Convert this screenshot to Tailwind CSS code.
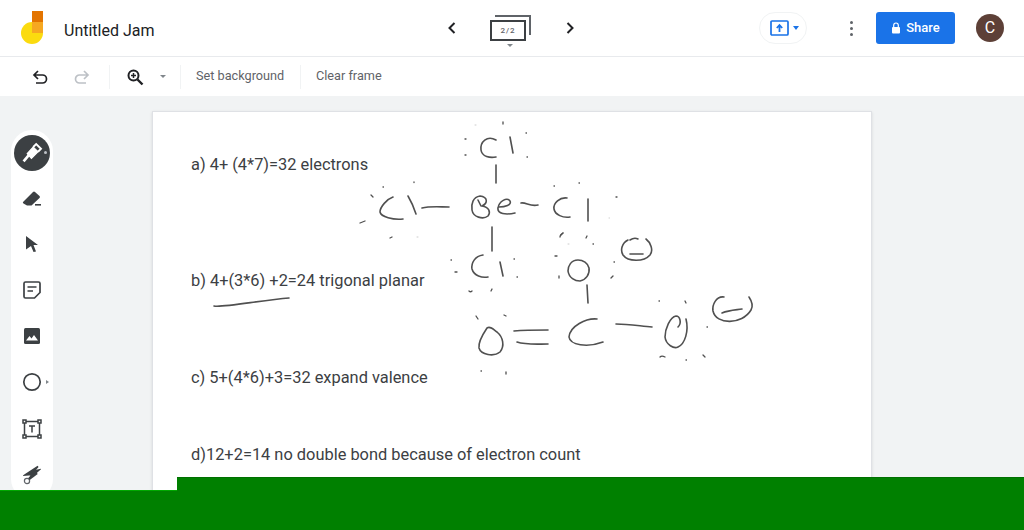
<!DOCTYPE html>
<html lang="en">
<head>
    <meta charset="UTF-8">
    <meta name="viewport" content="width=device-width, initial-scale=1.0">
    <title>Untitled Jam</title>
    <script src="https://cdn.jsdelivr.net/npm/@tailwindcss/browser@4"></script>
</head>
<body class="bg-white font-['Roboto',sans-serif]">
<div class="relative w-[1024px] h-[530px] overflow-hidden flex flex-col">

    <!-- Header -->
    <header class="h-[57px] shrink-0 flex items-center border-b border-[#e8eaed] bg-white">
        <svg class="ml-[21px] w-[24px] h-[36px] -mt-[1px]" viewBox="0 0 24 36">
            <circle cx="11" cy="23" r="11" fill="#fbdb0f"/>
            <rect x="11" y="1" width="11" height="11" fill="#e37400"/>
            <rect x="11" y="12" width="11" height="11" fill="#f6a821"/>
        </svg>
        <span class="ml-[19px] text-[16px] text-[#202124] mt-[5px] w-[90px] whitespace-nowrap">Untitled Jam</span>

        <svg class="ml-[293px] w-[10px] h-[14px]" viewBox="0 0 10 14" fill="none" stroke="#202124" stroke-width="2"><path d="M7.5 2 L2.5 7 L7.5 12"/></svg>
        <!-- frame picker -->
        <div class="relative ml-[33px] mt-[2px] w-[42px] h-[28px]">
            <div class="absolute left-[5px] top-0 w-[36px] h-[20px] border-t-[2px] border-r-[2px] border-[#5f6368]"></div>
            <div class="absolute left-0 top-[5px] w-[36px] h-[21px] bg-white border-2 border-[#3c4043] flex items-center justify-center text-[8px] font-medium text-[#5f6368] tracking-[1px]">2/2</div>
            <div class="absolute left-[17px] top-[29px] border-x-[3px] border-x-transparent border-t-[3px] border-t-[#80868b]"></div>
        </div>
        <svg class="ml-[33px] w-[10px] h-[14px]" viewBox="0 0 10 14" fill="none" stroke="#202124" stroke-width="2"><path d="M2.5 2 L7.5 7 L2.5 12"/></svg>

        <!-- present -->
        <div class="ml-[184px] w-[48px] h-[32px] rounded-full border border-[#f1f3f4] flex items-center pl-[10px] gap-[4px]">
            <svg class="w-[19px] h-[16px]" viewBox="0 0 19 16" fill="none">
                <rect x="1" y="1" width="17" height="14" rx="1" stroke="#1a73e8" stroke-width="1.7"/>
                <path d="M9.5 12 V6 M6.8 8 L9.5 5 L12.2 8" stroke="#1a73e8" stroke-width="1.8"/>
            </svg>
            <div class="border-x-[3.5px] border-x-transparent border-t-[4px] border-t-[#1a73e8]"></div>
        </div>

        <!-- more -->
        <div class="ml-[43px] flex flex-col gap-[3px]">
            <span class="w-[3px] h-[3px] rounded-full bg-[#5f6368]"></span>
            <span class="w-[3px] h-[3px] rounded-full bg-[#5f6368]"></span>
            <span class="w-[3px] h-[3px] rounded-full bg-[#5f6368]"></span>
        </div>

        <button class="ml-[23px] w-[79px] h-[32px] rounded-[3px] bg-[#1a73e8] text-white text-[13px] font-medium flex items-center justify-center gap-[5px]">
            <svg class="w-[10px] h-[12px]" viewBox="0 0 10 12" fill="none">
                <rect x="1" y="5" width="8" height="6.5" rx="1" fill="#fff"/>
                <path d="M2.7 5 V3.3 a2.3 2.3 0 0 1 4.6 0 V5" stroke="#fff" stroke-width="1.2"/>
            </svg>
            Share
        </button>
        <div class="ml-[21px] w-[28px] h-[28px] rounded-full bg-[#5d4037] text-white text-[16px] flex items-center justify-center">C</div>
    </header>

    <!-- Toolbar -->
    <div class="h-[39px] shrink-0 flex items-center bg-white text-[12.7px] text-[#5f6368]">
        <svg class="ml-[31px] w-[18px] h-[18px]" viewBox="0 0 18 18" fill="none" stroke="#202124" stroke-width="1.7"><path d="M7 3 L3 7 L7 11 M3 7 H11.5 A4 4 0 0 1 11.5 15 H5"/></svg>
        <svg class="ml-[24px] w-[18px] h-[18px]" viewBox="0 0 18 18" fill="none" stroke="#bdc1c6" stroke-width="1.7"><path d="M11 3 L15 7 L11 11 M15 7 H6.5 A4 4 0 0 0 6.5 15 H13"/></svg>
        <div class="ml-[18px] w-px h-[24px] bg-[#f1f3f4]"></div>
        <svg class="ml-[16px] w-[18px] h-[18px]" viewBox="0 0 18 18" fill="none" stroke="#202124"><circle cx="7.5" cy="7.5" r="5" stroke-width="2"/><path d="M11.5 11.5 L16.5 16.5" stroke-width="2.4"/><path d="M7.5 5 V10 M5 7.5 H10" stroke-width="1.5"/></svg>
        <div class="ml-[16px] border-x-[3px] border-x-transparent border-t-[3px] border-t-[#80868b]"></div>
        <div class="ml-[14px] w-px h-[24px] bg-[#f1f3f4]"></div>
        <span class="ml-[15px] mb-[2px] w-[88px] whitespace-nowrap">Set background</span>
        <div class="ml-[16px] w-px h-[24px] bg-[#f1f3f4]"></div>
        <span class="ml-[15px] mb-[2px] whitespace-nowrap">Clear frame</span>
    </div>

    <!-- Canvas -->
    <main class="flex-1 flex items-start bg-[#f1f3f4] min-h-0">
        <!-- Tool rail -->
        <div class="ml-[11px] mt-[34px] w-[42px] h-[370px] shrink-0 bg-white rounded-[21px] flex flex-col items-center">
            <div class="h-[46px] flex items-center justify-center">
                <div class="relative w-[36px] h-[36px] rounded-full bg-[#3c4043] flex items-center justify-center">
                    <svg class="w-[24px] h-[24px]" viewBox="0 0 20 20" fill="none" stroke="#fff">
                        <path d="M3 17 L8 11" stroke-width="2.2"/>
                        <path d="M6 10.5 L11 5 L15 9 L9.5 14.5 Z" fill="#fff" stroke-width="1"/>
                        <path d="M11 5 L13.5 2.5 L17.5 6.5 L15 9" stroke-width="1.6"/>
                    </svg>
                    <span class="absolute right-[3px] top-[16px] w-[3px] h-[3px] rounded-full bg-[#bdc1c6]"></span>
                </div>
            </div>
            <div class="h-[45px] flex items-center justify-center">
                <svg class="w-[20px] h-[18px]" viewBox="0 0 20 18" fill="#3c4043"><path d="M1 12 L11 2 Q12 1 13 2 L17.5 6 Q18.5 7 17.5 8 L9.5 15.5 H5 L1.5 13.5 Q0.5 12.8 1 12 Z"/><rect x="13" y="14" width="6" height="1.6"/></svg>
            </div>
            <div class="h-[46px] flex items-center justify-center">
                <svg class="w-[16px] h-[18px]" viewBox="0 0 16 18" fill="#3c4043"><path d="M2 1 L14 10 H9.5 L12 16.5 L9.5 17 L7 11 L2 14.5 Z"/></svg>
            </div>
            <div class="h-[46px] flex items-center justify-center">
                <svg class="w-[18px] h-[18px]" viewBox="0 0 18 18" fill="none" stroke="#3c4043" stroke-width="1.7"><path d="M2.5 1 H15.5 Q17 1 17 2.5 V11.5 L11.5 17 H2.5 Q1 17 1 15.5 V2.5 Q1 1 2.5 1 Z"/><path d="M4.5 6 H13.5 M4.5 10 H10"/></svg>
            </div>
            <div class="h-[46px] flex items-center justify-center">
                <svg class="w-[18px] h-[18px]" viewBox="0 0 18 18"><rect x="1" y="1" width="16" height="16" rx="1.5" fill="#3c4043"/><path d="M3 13.5 L6.5 9 L8.5 11.5 L11 8 L15 13.5 Z" fill="#fff"/></svg>
            </div>
            <div class="h-[46px] flex items-center justify-center relative">
                <svg class="w-[20px] h-[20px]" viewBox="0 0 20 20" fill="none" stroke="#3c4043" stroke-width="1.7"><circle cx="10" cy="10" r="8.2"/></svg>
                <span class="absolute left-[24px] top-[21px] border-y-[2.5px] border-y-transparent border-l-[3px] border-l-[#80868b]"></span>
            </div>
            <div class="h-[47px] flex items-center justify-center">
                <svg class="w-[20px] h-[20px]" viewBox="0 0 20 20" fill="none" stroke="#3c4043" stroke-width="1.5">
                    <rect x="2.5" y="2.5" width="15" height="15"/>
                    <g fill="#fff"><rect x="1" y="1" width="3" height="3"/><rect x="16" y="1" width="3" height="3"/><rect x="1" y="16" width="3" height="3"/><rect x="16" y="16" width="3" height="3"/></g>
                    <path d="M7 7 H13 M10 7 V13.5"/>
                </svg>
            </div>
            <div class="h-[45px] flex items-center justify-center">
                <svg class="w-[18px] h-[20px]" viewBox="0 0 18 20" fill="none">
                    <path d="M2 10 L15 1.5 L11 6 L16 5 L6 14 L9 9.5 Z" fill="#3c4043" stroke="#3c4043" stroke-width="1.5"/>
                    <circle cx="4" cy="16" r="2.6" stroke="#5f6368" stroke-width="1.2"/>
                    <path d="M6 14 L14 8" stroke="#3c4043" stroke-width="2.4"/>
                </svg>
            </div>
        </div>

        <!-- Frame -->
        <section class="ml-[99px] mt-[15px] w-[720px] h-[420px] shrink-0 bg-white border border-[#dfe1e5] shadow-sm pl-[38px] pt-[41px] text-[16.4px] leading-[24px] text-[#3c4043]">
            <p>a) 4+ (4*7)=32 electrons</p>
            <p class="mt-[92px]">b) 4+(3*6) +2=24 trigonal planar</p>
            <p class="mt-[73px]">c) 5+(4*6)+3=32 expand valence</p>
            <p class="mt-[53px]">d)12+2=14 no double bond because of electron count</p>
        </section>
    </main>

    <!-- Handwriting on the jam, free canvas in page coordinates -->
    <svg class="absolute left-0 top-0 w-[1024px] h-[530px] pointer-events-none" viewBox="0 0 1024 530" fill="none" stroke="#505050" stroke-width="1.6" stroke-linecap="round" stroke-linejoin="round">
        <!-- top Cl -->
        <path d="M496 140 C487 135 480 142 481 150 C482 157 490 158 496 157"/>
        <path d="M510 137 L513 153"/>
        <path d="M496 165 L496 183"/>
        <!-- left Cl and bond -->
        <path d="M393 197 C387 199 380 207 380 212 C381 217 393 220 403 219"/>
        <path d="M408 196 C411 201 414 208 416 214"/>
        <path d="M422 208 C430 206 440 207 449 207"/>
        <!-- Be -->
        <path d="M480 196 C473 197 471 204 472 210 C473 217 483 220 488 216 C491 212 489 207 482 206 C488 203 488 197 480 196"/>
        <path d="M478 200 L481 206"/>
        <path d="M499 207 C505 207 512 205 510 201 C507 197 499 201 498 208 C497 214 506 215 515 213"/>
        <path d="M521 203 C526 202 530 207 538 205"/>
        <!-- right Cl -->
        <path d="M567 198 C560 197 553 203 554 209 C555 215 563 218 570 217"/>
        <path d="M588 199 L588 221"/>
        <!-- lower Cl -->
        <path d="M492 227 L492 251"/>
        <path d="M483 255 C475 256 471 263 472 269 C474 276 482 278 488 277"/>
        <path d="M500 262 L503 276"/>
        <!-- O minus -->
        <path d="M578 260 C571 260 568 266 568 271 C569 278 575 281 580 281 C586 280 590 274 589 268 C588 263 583 260 578 260"/>
        <path d="M587 285 L588 303"/>
        <path d="M628 240 C622 243 620 250 623 255 C628 262 644 262 650 255 C654 250 650 242 646 239"/>
        <path d="M630 240 C633 238 636 238 638 239"/>
        <path d="M630 254 L643 254"/>
        <!-- O=C-O -->
        <path d="M487 328 C483 334 478 342 479 348 C481 355 494 357 500 352 C505 346 503 337 497 332 C493 329 490 326 487 328"/>
        <path d="M514 331 C525 330 537 330 548 330"/>
        <path d="M517 342 C526 345 537 344 548 344"/>
        <path d="M597 319 C586 318 570 326 569 337 C570 345 587 348 603 342"/>
        <path d="M616 324 C628 324 640 326 652 327"/>
        <path d="M678 327 C682 323 680 316 676 316 C670 317 665 329 665 337 C666 345 674 349 678 347 C685 344 689 331 686 319"/>
        <path d="M724 297 C716 296 712 305 713 311 C716 325 742 325 751 310 C754 305 751 300 749 297"/>
        <path d="M722 313 C729 310 735 310 742 309"/>
        <!-- underline -->
        <path d="M214 306 C222 308 262 300 289 298"/>
        <!-- lone pairs -->
        <g stroke-width="1.3">
            <path d="M503 122 V124 M465 139 h1 M465 155 h1 M526 133 h.5 M527 157 h.5"/>
            <path d="M371 195 L373 197 M360 223 L365 221 M383 187 h.5 M414 182 v.5 M390 238 L392 237"/>
            <path d="M616 197 h1 M561 235 L563 233 M586 238 L587 236 M593 244 h.5 M554 186 h.5 M579 183 h.5"/>
            <path d="M451 260 h.5 M455 272 h2 M514 259 h.5 M517 277 h.5 M469 291 C470 292 471 292 472 291 M491 291 L492 289"/>
            <path d="M560 237 C560 235 561 234 563 233 M555 256 h2 M559 276 v2 M614 262 h.5 M611 278 L613 276"/>
            <path d="M476 316 L478 319 M504 315 L506 316 M481 371 h.5 M506 372 v2"/>
            <path d="M659 301 h.5 M685 301 L686 303 M707 327 h.5 M660 357 C661 356 663 356 665 357 M686 360 h.5 M703 355 L705 357"/>
        </g>
        <g stroke="#ccc" stroke-width="1">
            <path d="M475 125 h1 M417 237 h1 M609 218 h.5 M568 244 h1"/>
        </g>
    </svg>

    <!-- Bars across the bottom of the capture -->
    <div class="absolute left-0 top-[490px] w-[177px] h-[40px] bg-[#008000] border-t border-[#00a800]"></div>
    <div class="absolute left-[177px] top-[477px] w-[847px] h-[53px] bg-[#008000] border-t border-[#007000]"></div>
</div>
</body>
</html>
